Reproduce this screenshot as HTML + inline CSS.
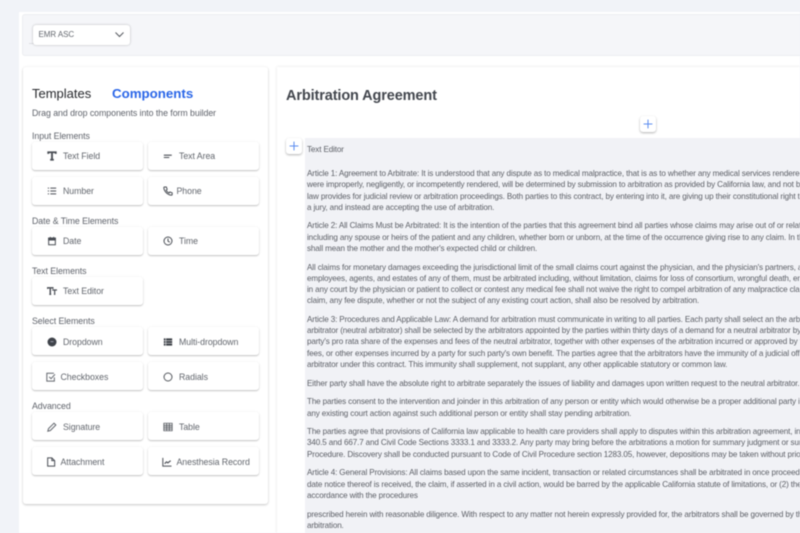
<!DOCTYPE html>
<html><head><meta charset="utf-8">
<style>
html,body{margin:0;padding:0;width:800px;height:533px;overflow:hidden;background:#f1f3f8}
#r{position:relative;width:800px;height:533px;overflow:hidden;font-family:"Liberation Sans",sans-serif;filter:blur(.5px)}
.a{position:absolute}
.t{position:absolute;white-space:nowrap;line-height:12px;height:12px}
.b{position:absolute;width:111px;height:28px;background:#fff;border-radius:3px;box-shadow:0 1px 1.5px rgba(0,0,0,.22),0 0 3px rgba(0,0,0,.05)}
.l{position:absolute;left:32px;font-size:8.8px;color:#5f636b;line-height:12px;white-space:nowrap;letter-spacing:-.06px}
.c{position:absolute;font-size:8.8px;color:#63676e;line-height:12px;white-space:nowrap;letter-spacing:-.06px}
.p{position:absolute;left:307px;font-size:8.1px;color:#5c5f66;line-height:12px;white-space:nowrap;letter-spacing:-.13px}
.i{position:absolute;width:10px;height:10px;fill:none;stroke:#4a4e55;stroke-width:1.2}
.pl{position:absolute;width:16px;height:16px;background:#fff;border-radius:3px;box-shadow:0 1px 2px rgba(0,0,0,.3)}
</style></head><body><div id="r">
<div class="a" style="left:19px;top:12px;width:781px;height:521px;background:#fff"></div>
<div class="a" style="left:22px;top:14px;width:778px;height:40px;background:#f5f6f9;border:1px solid #eceef1;border-right:0;border-radius:3px 0 0 3px"></div>
<div class="a" style="left:29px;top:43px;width:5px;height:1px;background:#dcdee2"></div>
<div class="a" style="left:33px;top:25px;width:97px;height:20px;background:#fff;border-radius:3px;box-shadow:0 0 2px rgba(0,0,0,.28)"></div>
<div class="c" style="left:38.5px;top:29px;font-size:8px;letter-spacing:-.05px">EMR ASC</div>
<svg class="a" style="left:114px;top:30px;width:11px;height:9px" viewBox="0 0 11 9"><path d="M1.5 2.5 5.5 6.5 9.5 2.5" fill="none" stroke="#55595f" stroke-width="1"/></svg>

<div class="a" style="left:23px;top:67px;width:245px;height:437px;background:#fff;border-radius:3px;box-shadow:0 1px 2px rgba(0,0,0,.2),0 0 3px rgba(0,0,0,.05)"></div>
<div class="a" style="left:277px;top:67px;width:523px;height:466px;background:#fff;box-shadow:0 0 3px rgba(0,0,0,.12)"></div>
<div class="a" style="left:305px;top:138px;width:495px;height:395px;background:#f1f2f6"></div>

<div class="t" style="left:32px;top:86px;font-size:13px;line-height:15px;height:15px;color:#26282c">Templates</div>
<div class="t" style="left:112px;top:86px;font-size:13.3px;line-height:15px;height:15px;font-weight:bold;color:#2a66e8">Components</div>
<div class="l" style="top:106.5px">Drag and drop components into the form builder</div>

<div class="l" style="top:129.5px">Input Elements</div>
<div class="l" style="top:214.5px">Date &amp; Time Elements</div>
<div class="l" style="top:264.5px">Text Elements</div>
<div class="l" style="top:315px">Select Elements</div>
<div class="l" style="top:400px">Advanced</div>

<div class="b" style="left:32px;top:142px"></div><div class="b" style="left:148px;top:142px"></div>
<div class="b" style="left:32px;top:177px"></div><div class="b" style="left:148px;top:177px"></div>
<div class="b" style="left:32px;top:227px"></div><div class="b" style="left:148px;top:227px"></div>
<div class="b" style="left:32px;top:277px"></div>
<div class="b" style="left:32px;top:327px"></div><div class="b" style="left:148px;top:327px"></div>
<div class="b" style="left:32px;top:362px"></div><div class="b" style="left:148px;top:362px"></div>
<div class="b" style="left:32px;top:412px"></div><div class="b" style="left:148px;top:412px"></div>
<div class="b" style="left:32px;top:447px"></div><div class="b" style="left:148px;top:447px"></div>

<div class="c" style="left:63px;top:150px">Text Field</div>
<div class="c" style="left:179px;top:150px">Text Area</div>
<div class="c" style="left:63px;top:185px">Number</div>
<div class="c" style="left:176.5px;top:185px">Phone</div>
<div class="c" style="left:63px;top:235px">Date</div>
<div class="c" style="left:179px;top:235px">Time</div>
<div class="c" style="left:63px;top:285px">Text Editor</div>
<div class="c" style="left:63px;top:335.5px">Dropdown</div>
<div class="c" style="left:179px;top:335.5px">Multi-dropdown</div>
<div class="c" style="left:60.5px;top:370.5px">Checkboxes</div>
<div class="c" style="left:179px;top:370.5px">Radials</div>
<div class="c" style="left:63px;top:420.5px">Signature</div>
<div class="c" style="left:179px;top:420.5px">Table</div>
<div class="c" style="left:60.5px;top:455.5px">Attachment</div>
<div class="c" style="left:176.5px;top:455.5px">Anesthesia Record</div>

<svg class="i" style="left:47px;top:151px" viewBox="0 0 12 12"><path d="M1.5 3.5V1.5H10.5V3.5M6 1.5V10.5M3.8 10.5H8.2" stroke-width="2.2"/></svg>
<svg class="i" style="left:163px;top:151px" viewBox="0 0 12 12"><path d="M1 5H10.5M1 7.8H7.5" stroke-width="1.3"/></svg>
<svg class="i" style="left:47px;top:186px" viewBox="0 0 12 12"><path d="M4 2.5H11M4 6H11M4 9.5H11M1 2.5H2.4M1 6H2.4M1 9.5H2.4"/></svg>
<svg class="i" style="left:163px;top:186px" viewBox="0 0 12 12"><path d="M1.8 1.2H4L5 4 3.8 5C4.5 6.6 5.6 7.7 7.2 8.4L8.2 7.2 11 8.2V10.2C11 10.8 10.5 11 10 11 5.5 10.6 1.4 6.5 1 2.2 1 1.6 1.3 1.2 1.8 1.2Z"/></svg>
<svg class="i" style="left:47px;top:236px" viewBox="0 0 12 12"><path d="M2 2.5H10V10.5H2Z"/><path d="M2 2.5H10V4.8H2Z" fill="#4a4e55"/><path d="M4 1V3M8 1V3"/></svg>
<svg class="i" style="left:163px;top:236px" viewBox="0 0 12 12"><circle cx="6" cy="6" r="4.8"/><path d="M6 3V6.2L8.2 7.4"/></svg>
<svg class="i" style="left:47px;top:286px" viewBox="0 0 12 12"><path d="M.8 3.4V2.2H7V3.4M3.9 2.2V10M2.8 10H5" stroke-width="1.7"/><path d="M7 5.5V4.8H11.4V5.5M9.2 4.8V10M8.3 10H10" stroke-width="1.4"/></svg>
<svg class="i" style="left:47px;top:336.5px" viewBox="0 0 12 12"><circle cx="6" cy="6" r="5.4" fill="#3f434a" stroke="none"/><path d="M4.2 5.6H7.8" stroke="#aab" stroke-width="1"/></svg>
<svg class="i" style="left:163px;top:336.5px" viewBox="0 0 12 12"><path d="M1 1.6H3V4.2H1ZM1 4.8H3V7.2H1ZM1 7.8H3V10.4H1ZM3.7 1.6H11V4.2H3.7ZM3.7 4.8H11V7.2H3.7ZM3.7 7.8H11V10.4H3.7Z" fill="#3f434a" stroke="none"/></svg>
<svg class="i" style="left:46px;top:371.5px;stroke:#63676e" viewBox="0 0 12 12"><path d="M10 6.5V11H1V1.5H9.5"/><path d="M3.8 5.8 6 8 10.8 2.8"/></svg>
<svg class="i" style="left:163px;top:371.5px;stroke:#55595f" viewBox="0 0 12 12"><circle cx="6" cy="6" r="4.8"/></svg>
<svg class="i" style="left:47px;top:421.5px;stroke:#63676e" viewBox="0 0 12 12"><path d="M1 11 1.8 8 8.4 1.4 10.6 3.6 4 10.2Z"/></svg>
<svg class="i" style="left:163px;top:421.5px;stroke:#55595f" viewBox="0 0 12 12"><path d="M1 1.5H11V10.5H1ZM1 4H11M1 6.2H11M1 8.4H11M4.4 1.5V10.5M7.6 1.5V10.5" stroke-width="1"/></svg>
<svg class="i" style="left:46px;top:456.5px" viewBox="0 0 12 12"><path d="M2 1H7L10.4 4.4V11H2ZM7 1V4.4H10.4"/></svg>
<svg class="i" style="left:162px;top:456.5px" viewBox="0 0 12 12"><path d="M1 1V11H11.4"/><path d="M3.2 8 5.4 5.8 7 7 10.4 4.4" stroke-width="1.4"/></svg>

<div class="t" style="left:286px;top:87px;height:18px;line-height:18px;font-size:14.5px;font-weight:bold;color:#42464d;letter-spacing:-.12px">Arbitration Agreement</div>

<div class="pl" style="left:640px;top:116px"></div>
<svg class="a" style="left:640px;top:116px;width:16px;height:16px" viewBox="0 0 16 16"><path d="M8 3.6V12.4M3.6 8H12.4" stroke="#5b8df0" stroke-width="1"/></svg>
<div class="pl" style="left:286px;top:138px"></div>
<svg class="a" style="left:286px;top:138px;width:16px;height:16px" viewBox="0 0 16 16"><path d="M8 3.6V12.4M3.6 8H12.4" stroke="#5b8df0" stroke-width="1"/></svg>

<div class="p" style="top:144px">Text Editor</div>
<div class="p" style="top:168px">Article 1: Agreement to Arbitrate: It is understood that any dispute as to medical malpractice, that is as to whether any medical services rendered under this contract</div>
<div class="p" style="top:179px">were improperly, negligently, or incompetently rendered, will be determined by submission to arbitration as provided by California law, and not by a lawsuit or</div>
<div class="p" style="top:190.5px">law provides for judicial review or arbitration proceedings. Both parties to this contract, by entering into it, are giving up their constitutional right to have</div>
<div class="p" style="top:201.5px">a jury, and instead are accepting the use of arbitration.</div>
<div class="p" style="top:220px">Article 2: All Claims Must be Arbitrated: It is the intention of the parties that this agreement bind all parties whose claims may arise out of or relate to</div>
<div class="p" style="top:231.5px">including any spouse or heirs of the patient and any children, whether born or unborn, at the time of the occurrence giving rise to any claim. In the case of</div>
<div class="p" style="top:243px">shall mean the mother and the mother's expected child or children.</div>
<div class="p" style="top:261.5px">All claims for monetary damages exceeding the jurisdictional limit of the small claims court against the physician, and the physician's partners, associates,</div>
<div class="p" style="top:273px">employees, agents, and estates of any of them, must be arbitrated including, without limitation, claims for loss of consortium, wrongful death, emotional</div>
<div class="p" style="top:284px">in any court by the physician or patient to collect or contest any medical fee shall not waive the right to compel arbitration of any malpractice claim.</div>
<div class="p" style="top:295px">claim, any fee dispute, whether or not the subject of any existing court action, shall also be resolved by arbitration.</div>
<div class="p" style="top:314px">Article 3: Procedures and Applicable Law: A demand for arbitration must communicate in writing to all parties. Each party shall select an the arbitrator</div>
<div class="p" style="top:325px">arbitrator (neutral arbitrator) shall be selected by the arbitrators appointed by the parties within thirty days of a demand for a neutral arbitrator by</div>
<div class="p" style="top:336px">party's pro rata share of the expenses and fees of the neutral arbitrator, together with other expenses of the arbitration incurred or approved by the</div>
<div class="p" style="top:347.5px">fees, or other expenses incurred by a party for such party's own benefit. The parties agree that the arbitrators have the immunity of a judicial officer</div>
<div class="p" style="top:359px">arbitrator under this contract. This immunity shall supplement, not supplant, any other applicable statutory or common law.</div>
<div class="p" style="top:377.5px">Either party shall have the absolute right to arbitrate separately the issues of liability and damages upon written request to the neutral arbitrator.</div>
<div class="p" style="top:396px">The parties consent to the intervention and joinder in this arbitration of any person or entity which would otherwise be a proper additional party in</div>
<div class="p" style="top:407.5px">any existing court action against such additional person or entity shall stay pending arbitration.</div>
<div class="p" style="top:426px">The parties agree that provisions of California law applicable to health care providers shall apply to disputes within this arbitration agreement, including</div>
<div class="p" style="top:437px">340.5 and 667.7 and Civil Code Sections 3333.1 and 3333.2. Any party may bring before the arbitrations a motion for summary judgment or summary</div>
<div class="p" style="top:448.5px">Procedure. Discovery shall be conducted pursuant to Code of Civil Procedure section 1283.05, however, depositions may be taken without prior</div>
<div class="p" style="top:467px">Article 4: General Provisions: All claims based upon the same incident, transaction or related circumstances shall be arbitrated in once proceeding.</div>
<div class="p" style="top:478.5px">date notice thereof is received, the claim, if asserted in a civil action, would be barred by the applicable California statute of limitations, or (2) the</div>
<div class="p" style="top:490px">accordance with the procedures</div>
<div class="p" style="top:508.5px">prescribed herein with reasonable diligence. With respect to any matter not herein expressly provided for, the arbitrators shall be governed by the</div>
<div class="p" style="top:520px">arbitration.</div>
</div></body></html>
